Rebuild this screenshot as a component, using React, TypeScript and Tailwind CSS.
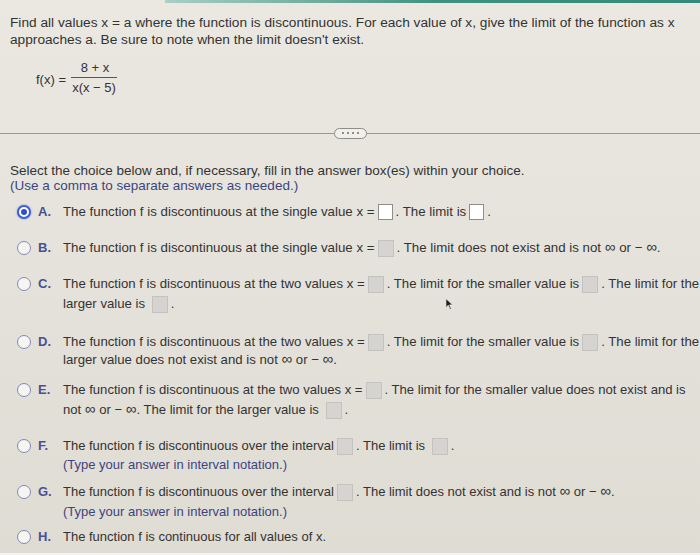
import React from 'react';

const Box = ({ filled = true }: { filled?: boolean }) => (
  <span
    className={
      filled
        ? 'inline-block w-[16px] h-[17px] align-middle mx-[3px] bg-[#d5d4d0] border border-[#c3c2be]'
        : 'inline-block w-[15px] h-[16px] align-middle mx-[3px] bg-white border border-[#8d8d8a]'
    }
  />
);

const Radio = ({ checked = false }: { checked?: boolean }) => (
  <span className="h-[18px] ml-[7px] flex items-center">
    {checked ? (
      <span className="w-[14px] h-[14px] rounded-full border-2 border-[#3f5fd6] bg-white flex items-center justify-center shadow-[0_0_2px_#6f8ae0]">
        <span className="w-[6px] h-[6px] rounded-full bg-[#2f4fcc]" />
      </span>
    ) : (
      <span className="w-[14px] h-[14px] rounded-full border-[1.5px] border-[#8189b6] bg-[#f6f5f2]" />
    )}
  </span>
);

const Line = ({ className = '', children }: { className?: string; children: React.ReactNode }) => (
  <div className={`h-[18px] leading-[18px] whitespace-nowrap ${className}`}>{children}</div>
);

const Option = ({
  letter,
  checked,
  className,
  children,
}: {
  letter: string;
  checked?: boolean;
  className: string;
  children: React.ReactNode;
}) => (
  <div className={`flex ${className}`}>
    <Radio checked={checked} />
    <span className="ml-[7px] w-[25px] shrink-0 h-[18px] leading-[18px] text-[13px] font-bold text-[#4b4f93]">{letter}</span>
    <div className="flex flex-col">{children}</div>
  </div>
);

const Inf = () => <span className="text-[15px] leading-none">∞</span>;

export default function App() {
  return (
    <div
      className="relative w-[700px] h-[555px] overflow-hidden flex flex-col bg-linear-to-b from-[#ebe8e2] to-[#dfdcd4] text-[13px] text-[#333333]"
      style={{ fontFamily: '"Liberation Sans", Arial, sans-serif' }}
    >
      <div className="h-[3px] ml-[165px] bg-linear-to-r from-[#a9cfc6] via-[#3f9281] to-[#35897a]" />

      <div className="pl-[10px] mt-[11px] leading-[17px] text-[13.7px] whitespace-nowrap">
        <p>Find all values x = a where the function is discontinuous. For each value of x, give the limit of the function as x</p>
        <p>approaches a. Be sure to note when the limit doesn't exist.</p>
      </div>

      <div className="flex items-center ml-[36px] mt-[13px]">
        <span className="mt-[3px]">f(x) =</span>
        <div className="ml-[5px] flex flex-col items-center">
          <span className="leading-[14px] pl-[2px]">8 + x</span>
          <span className="h-px w-[46px] mt-[2px] bg-[#555]" />
          <span className="leading-[14px] mt-[3px]">x(x − 5)</span>
        </div>
      </div>

      <div className="flex items-center h-[12px] mt-[32px]">
        <div className="flex-1 h-px bg-[#9a9893]" />
        <div className="w-[33px] h-[11px] rounded-full border border-[#8e8c87] bg-[#f1efea] flex items-center justify-center gap-[3px]">
          <span className="w-[2px] h-[2px] rounded-full bg-[#6d6b66]" />
          <span className="w-[2px] h-[2px] rounded-full bg-[#6d6b66]" />
          <span className="w-[2px] h-[2px] rounded-full bg-[#6d6b66]" />
          <span className="w-[2px] h-[2px] rounded-full bg-[#6d6b66]" />
        </div>
        <div className="flex-1 h-px bg-[#9a9893]" />
      </div>

      <div className="pl-[10px] mt-[24px] leading-[15px] text-[13.5px] whitespace-nowrap">
        <p>Select the choice below and, if necessary, fill in the answer box(es) within your choice.</p>
        <p className="text-[#3c4480]">(Use a comma to separate answers as needed.)</p>
      </div>

      <div className="pl-[10px] flex flex-col">
        <Option letter="A." checked className="mt-[10px] text-[13.3px]">
          <Line>
            The function f is discontinuous at the single value x =<Box filled={false} />. The limit is
            <Box filled={false} />.
          </Line>
        </Option>

        <Option letter="B." className="mt-[18px] text-[13.3px]">
          <Line>
            The function f is discontinuous at the single value x =<Box />. The limit does not exist and is not <Inf /> or
            − <Inf />.
          </Line>
        </Option>

        <Option letter="C." className="mt-[18px] text-[13.2px]">
          <Line>
            The function f is discontinuous at the two values x =<Box />. The limit for the smaller value is
            <Box />. The limit for the
          </Line>
          <Line className="mt-[2px]">
            larger value is <Box />.
          </Line>
        </Option>

        <Option letter="D." className="mt-[20px] text-[13.2px]">
          <Line>
            The function f is discontinuous at the two values x =<Box />. The limit for the smaller value is
            <Box />. The limit for the
          </Line>
          <Line>
            larger value does not exist and is not <Inf /> or − <Inf />.
          </Line>
        </Option>

        <Option letter="E." className="mt-[12px] text-[13.1px]">
          <Line>
            The function f is discontinuous at the two values x =<Box />. The limit for the smaller value does not exist and is
          </Line>
          <Line className="mt-[2px]">
            not <Inf /> or − <Inf />. The limit for the larger value is <Box />.
          </Line>
        </Option>

        <Option letter="F." className="mt-[18px]">
          <Line>
            The function f is discontinuous over the interval<Box />. The limit is <Box />.
          </Line>
          <Line className="mt-px text-[#3c4480]">(Type your answer in interval notation.)</Line>
        </Option>

        <Option letter="G." className="mt-[9px]">
          <Line>
            The function f is discontinuous over the interval<Box />. The limit does not exist and is not <Inf /> or −{' '}
            <Inf />.
          </Line>
          <Line className="mt-[2px] text-[#3c4480]">(Type your answer in interval notation.)</Line>
        </Option>

        <Option letter="H." className="mt-[7px]">
          <Line>The function f is continuous for all values of x.</Line>
        </Option>
      </div>

      <div className="flex-1" />
      <div className="h-[2px] bg-[#f3f2ee]" />

      <svg className="absolute left-[445px] top-[297px]" width="10" height="14" viewBox="0 0 11 14">
        <path d="M1 1 L1 11 L3.5 8.5 L5.5 13 L7 12.3 L5 8 L8.5 8 Z" fill="#1d1d1d" stroke="#f4f4f4" strokeWidth="0.8" />
      </svg>
    </div>
  );
}
